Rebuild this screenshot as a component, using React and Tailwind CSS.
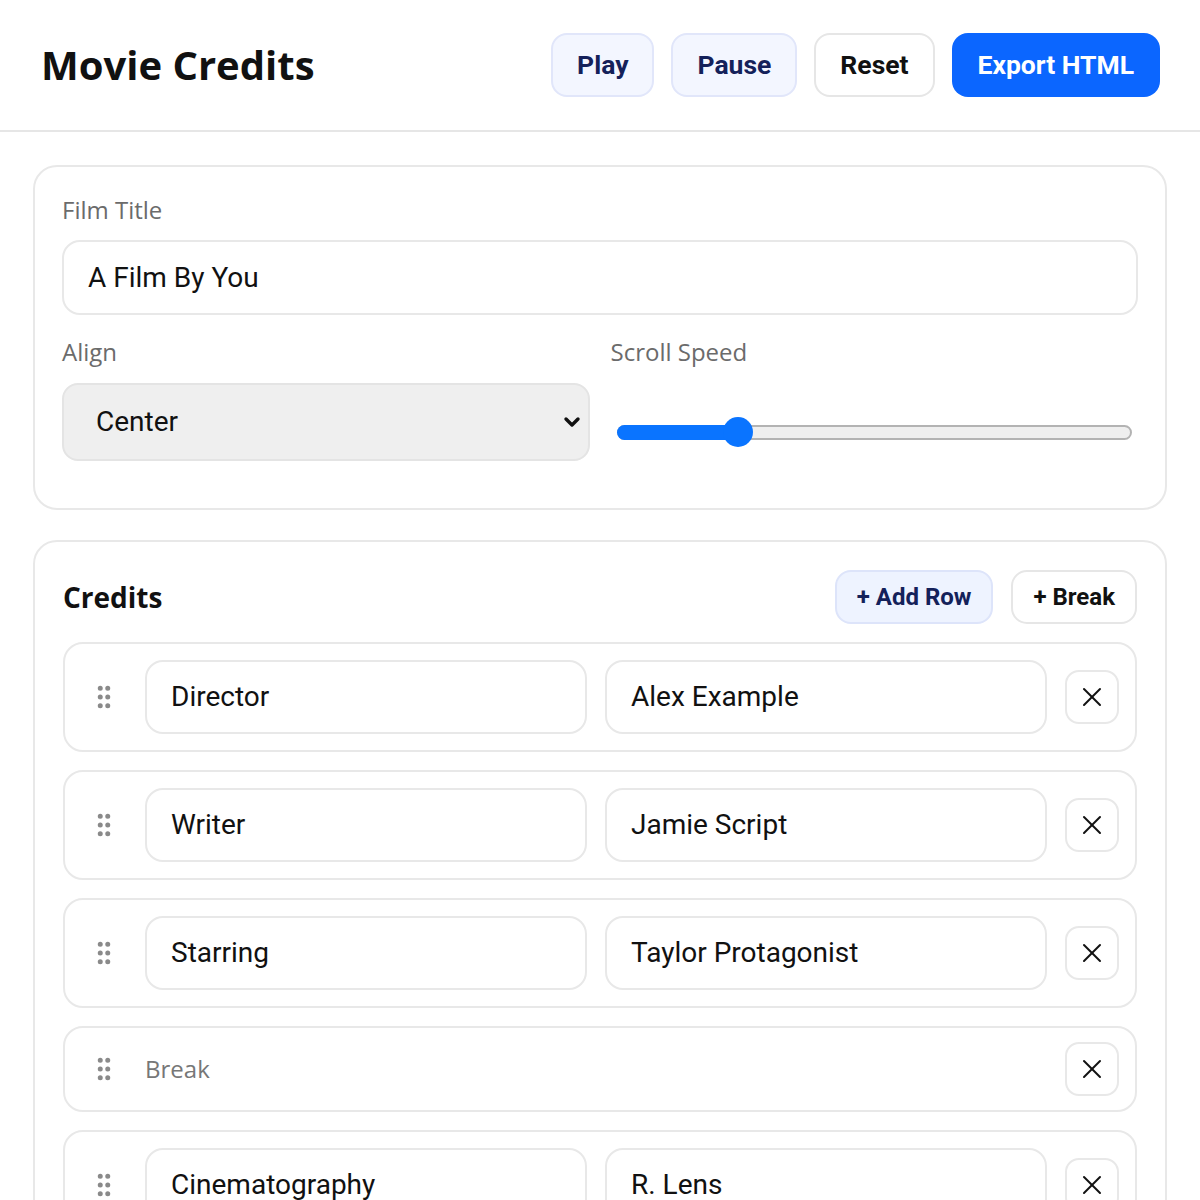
import React from 'react';
import { GripVertical } from 'lucide-react';

const credits = [
  { id: 1, type: 'row', role: 'Director', name: 'Alex Example' },
  { id: 2, type: 'row', role: 'Writer', name: 'Jamie Script' },
  { id: 3, type: 'row', role: 'Starring', name: 'Taylor Protagonist' },
  { id: 4, type: 'break' },
  { id: 5, type: 'row', role: 'Cinematography', name: 'R. Lens' },
];

const sans = { fontFamily: '"Open Sans", "Noto Sans", sans-serif' };
const roboto = { fontFamily: 'Roboto, "Liberation Sans", sans-serif' };

const CloseIcon = () => (
  <svg width="20" height="20" viewBox="0 0 20 20" fill="none" stroke="#111" strokeWidth="2" strokeLinecap="round">
    <line x1="2" y1="2" x2="18" y2="18" />
    <line x1="18" y1="2" x2="2" y2="18" />
  </svg>
);

const RemoveButton = () => (
  <button className="w-[54px] h-[54px] shrink-0 flex items-center justify-center rounded-[14px] border-2 border-[#e8e8e8] bg-white">
    <CloseIcon />
  </button>
);

const Handle = () => (
  <div className="w-[46px] shrink-0 flex items-center justify-center text-[#8a8a8a]">
    <GripVertical size={30} strokeWidth={2} />
  </div>
);

const TextField = ({ value }) => (
  <div
    className="flex-1 h-[74px] flex items-center px-[24px] rounded-[18px] border-2 border-[#e8e8e8] bg-white text-[28px] text-[#111]"
    style={roboto}
  >
    {value}
  </div>
);

const CreditRow = ({ item }) => {
  if (item.type === 'break') {
    return (
      <div className="flex items-center gap-[18px] px-4 py-[14px] rounded-[20px] border-2 border-[#e8e8e8]">
        <Handle />
        <div className="flex-1 text-[24px] text-[#777]" style={sans}>Break</div>
        <RemoveButton />
      </div>
    );
  }
  return (
    <div className="flex items-center gap-[18px] p-4 rounded-[20px] border-2 border-[#e8e8e8]">
      <Handle />
      <TextField value={item.role} />
      <TextField value={item.name} />
      <RemoveButton />
    </div>
  );
};

export default function App() {
  const speed = 23.4;

  return (
    <div className="min-h-screen bg-white">
      <header className="h-[132px] flex items-center justify-between pl-[41px] pr-[40px] border-b-2 border-[#e6e6e6]">
        <h1 className="text-[40px] font-bold text-[#111]" style={sans}>Movie Credits</h1>
        <div className="flex items-center gap-[17px] text-[26.5px] font-bold" style={roboto}>
          <button className="h-[64px] px-[24px] rounded-[16px] border-2 border-[#e1e6fa] bg-[#f3f6ff] text-[#14215a]">Play</button>
          <button className="h-[64px] px-[24px] rounded-[16px] border-2 border-[#e1e6fa] bg-[#f3f6ff] text-[#14215a]">Pause</button>
          <button className="h-[64px] px-[24px] rounded-[16px] border-2 border-[#e6e6e6] bg-white text-[#111]">Reset</button>
          <button className="h-[64px] px-[26px] rounded-[16px] bg-[#0b66ff] text-white">Export HTML</button>
        </div>
      </header>

      <main className="px-[33px] pt-[33px] flex flex-col gap-[30px]">
        <section className="rounded-[24px] border-2 border-[#e8e8e8] px-[27px] pt-[25px] pb-[47px]">
          <label className="block text-[24px] leading-[36px] text-[#6b6b6b]" style={sans}>Film Title</label>
          <div
            className="mt-[12px] h-[75px] flex items-center px-[24px] rounded-[18px] border-2 border-[#e8e8e8] text-[28px] text-[#111]"
            style={roboto}
          >
            A Film By You
          </div>
          <div className="mt-[19px] grid grid-cols-2 gap-[21px]">
            <div>
              <label className="block text-[24px] leading-[36px] text-[#6b6b6b]" style={sans}>Align</label>
              <div
                className="mt-[13px] h-[78px] flex items-center justify-between pl-[32px] pr-[6px] rounded-[16px] border-2 border-[#e4e4e4] bg-[#efefef] text-[28px] text-[#111]"
                style={roboto}
              >
                <span>Center</span>
                <svg width="20" height="20" viewBox="0 0 20 20" fill="none" stroke="#111" strokeWidth="3.4" strokeLinecap="round" strokeLinejoin="round">
                  <polyline points="4,7 10,13 16,7" />
                </svg>
              </div>
            </div>
            <div>
              <label className="block text-[24px] leading-[36px] text-[#6b6b6b]" style={sans}>Scroll Speed</label>
              <div className="mt-[13px] h-[78px] flex items-center px-[6px] pt-[20px]">
                <div className="relative w-full h-[15px] rounded-full border-2 border-[#b3b3b3] bg-[#efefef]">
                  <div className="absolute -left-[2px] -top-[2px] h-[15px] rounded-full bg-[#0a74ff]" style={{ width: `${speed}%` }} />
                  <div
                    className="absolute top-1/2 w-[30px] h-[30px] -translate-x-1/2 -translate-y-1/2 rounded-full bg-[#0a74ff]"
                    style={{ left: `${speed}%` }}
                  />
                </div>
              </div>
            </div>
          </div>
        </section>

        <section className="rounded-[24px] border-2 border-[#e8e8e8] px-[28px] pt-[28px] pb-[28px]">
          <div className="flex items-center justify-between">
            <h2 className="text-[28px] font-bold text-[#111]" style={sans}>Credits</h2>
            <div className="flex items-center gap-[18px] text-[24px] font-bold" style={roboto}>
              <button className="h-[54px] px-[20px] rounded-[16px] border-2 border-[#dde4fa] bg-[#eef3ff] text-[#14215a]">+ Add Row</button>
              <button className="h-[54px] px-[20px] rounded-[16px] border-2 border-[#e6e6e6] bg-white text-[#111]">+ Break</button>
            </div>
          </div>
          <div className="mt-[18px] flex flex-col gap-[18px]">
            {credits.map((item) => (
              <CreditRow key={item.id} item={item} />
            ))}
          </div>
        </section>
      </main>
    </div>
  );
}
